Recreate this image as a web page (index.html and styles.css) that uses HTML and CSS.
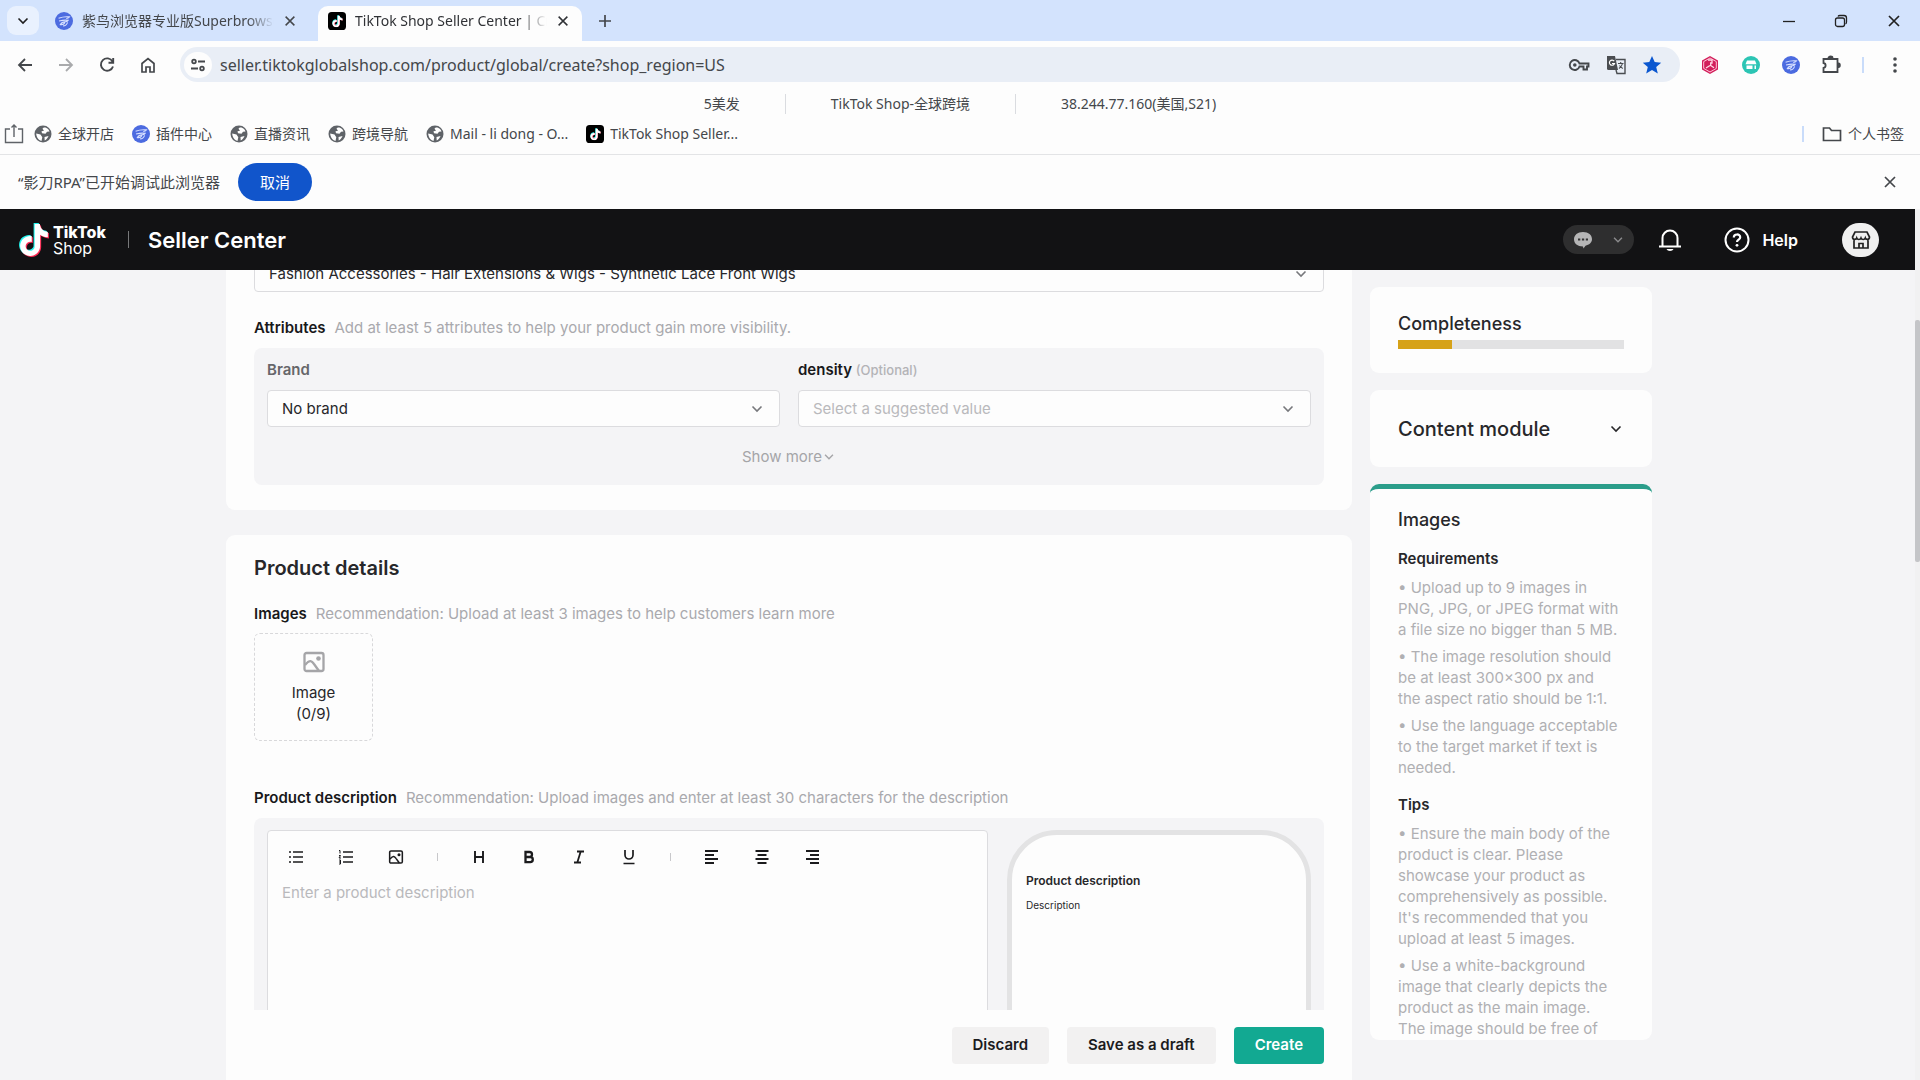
FILE: index.html
```html
<!DOCTYPE html>
<html lang="en">
<head>
<meta charset="utf-8">
<title>TikTok Shop Seller Center</title>
<link rel="stylesheet" href="styles.css">
</head>
<body>
<svg class="defs" aria-hidden="true">
  <symbol id="note" viewBox="0 0 24 24"><path d="M12.525.02c1.31-.02 2.61-.01 3.91-.02.08 1.53.63 3.09 1.75 4.17 1.12 1.11 2.7 1.62 4.24 1.79v4.03c-1.44-.05-2.89-.35-4.2-.97-.57-.26-1.1-.59-1.62-.93-.01 2.92.01 5.84-.02 8.75-.08 1.4-.54 2.79-1.35 3.94-1.31 1.92-3.58 3.17-5.91 3.21-1.43.08-2.86-.31-4.08-1.03-2.02-1.19-3.44-3.37-3.65-5.71-.02-.5-.03-1-.01-1.49.18-1.9 1.12-3.72 2.58-4.96 1.66-1.44 3.98-2.13 6.15-1.72.02 1.48-.04 2.96-.04 4.44-.99-.32-2.15-.23-3.02.37-.63.41-1.11 1.04-1.36 1.75-.21.51-.15 1.07-.14 1.61.24 1.64 1.82 3.02 3.5 2.87 1.12-.01 2.19-.66 2.77-1.61.19-.33.4-.67.41-1.06.1-1.79.06-3.57.07-5.36.01-4.03-.01-8.05.02-12.07z"/></symbol>
  <symbol id="chevron" viewBox="0 0 16 16"><path d="M3.5 5.5 8 10l4.500-4.500" fill="none" stroke="currentColor" stroke-width="1.600"/></symbol>
  <symbol id="cross" viewBox="0 0 16 16"><path d="m3 3 10 10M13 3 3 13" fill="none" stroke="currentColor" stroke-width="1.700"/></symbol>
  <symbol id="globe" viewBox="0 0 18 18"><circle cx="9" cy="9" r="8.500" fill="#5f6368"/><path d="M2.200 8.500 6.500 9.500l1.800 2.800-.8 3.700C4.500 15.200 2.300 12.200 2.200 8.500zM8.500 3.800c.5-1.300 2-1.600 3-1.300 2 .8 3.500 2.200 4 4l-2.500.3-1.500 2-3.500-.5-.5-2 2.500-.6zM10.500 12l4-1c-.5 1.800-2 3.700-3.800 4.500z" fill="#fff"/></symbol>
  <symbol id="bird" viewBox="0 0 20 20"><circle cx="10" cy="10" r="10" fill="#4c6be0"/><path d="M4 7c4-1.500 8-2 12-1.500-1 1.300-2 1.600-3.500 1.700M4.500 10c4-1 7-1.300 10-.8-1 1.300-2 1.500-3 1.600M6 14c1-2 3-3 5-3-.5 2-2 3.500-5 3zm3 1.500c2 0 4-1.500 5-4" fill="none" stroke="#d7e0ff" stroke-width="1.300"/></symbol>
  <symbol id="tik" viewBox="0 0 20 20"><rect width="20" height="20" rx="4" fill="#000"/><use href="#note" x="4" y="3" width="12" height="13" fill="#25f4ee"/><use href="#note" x="5" y="4" width="12" height="13" fill="#fe2c55"/><use href="#note" x="4" y="4" width="13" height="13" fill="#fff"/></symbol>
  <symbol id="picture" viewBox="0 0 24 24"><rect x="2.500" y="3" width="19" height="18" rx="2" fill="none" stroke="currentColor" stroke-width="2.300"/><circle cx="16.500" cy="8.500" r="2.300" fill="currentColor"/><path d="M3 15c5-6 7-4 9-1l5 7" fill="none" stroke="currentColor" stroke-width="2.300"/></symbol>
</svg>

<div class="tabs">
  <button class="tab-search" aria-label="Search tabs"><svg class="i16"><use href="#chevron"/></svg></button>
  <div class="tab">
    <svg class="i18"><use href="#bird"/></svg><span class="tab-title">紫鸟浏览器专业版Superbrowser</span>
    <button class="bare" aria-label="Close tab"><svg class="i14"><use href="#cross"/></svg></button>
  </div>
  <div class="tab active">
    <svg class="i18"><use href="#tik"/></svg><span class="tab-title">TikTok Shop Seller Center | Create</span>
    <button class="bare" aria-label="Close tab"><svg class="i14"><use href="#cross"/></svg></button>
  </div>
  <button class="bare new-tab" aria-label="New tab"><svg class="i16" viewBox="0 0 16 16"><path d="M8 2v12M2 8h12" stroke="currentColor" stroke-width="1.700"/></svg></button>
  <div class="window">
    <button class="bare" aria-label="Minimize"><svg class="i14" viewBox="0 0 14 14"><path d="M1 7.500h12" stroke="currentColor" stroke-width="1.300"/></svg></button>
    <button class="bare" aria-label="Restore"><svg class="i14" viewBox="0 0 14 14" fill="none" stroke="currentColor" stroke-width="1.300"><rect x="1.500" y="4" width="9" height="8.500" rx="2"/><path d="M4 2.500C4.500 1.500 5 1.500 6 1.500h4c2 0 2.500 1 2.500 2.500v4c0 1 0 1.500-1 2"/></svg></button>
    <button class="bare" aria-label="Close window"><svg class="i16"><use href="#cross"/></svg></button>
  </div>
</div>

<div class="toolbar">
  <div class="nav">
    <button class="bare" aria-label="Back"><svg class="i18" viewBox="0 0 18 18" fill="none" stroke="currentColor" stroke-width="1.800"><path d="M16 9H3M9 3 3 9l6 6"/></svg></button>
    <button class="bare faint" aria-label="Forward"><svg class="i18" viewBox="0 0 18 18" fill="none" stroke="currentColor" stroke-width="1.800"><path d="M2 9h13M9 3l6 6-6 6"/></svg></button>
    <button class="bare" aria-label="Reload"><svg class="i18" viewBox="0 0 18 18" fill="none" stroke="currentColor" stroke-width="1.900"><path d="M14.500 5.500A6.200 6.200 0 1 0 15 10.500M15.200 2v4.700h-4.700"/></svg></button>
    <button class="bare" aria-label="Home"><svg class="i18" viewBox="0 0 18 18" fill="none" stroke="currentColor" stroke-width="1.700"><path d="M3 7.500 9 2.500l6 5V16h-4v-5H7v5H3z"/></svg></button>
  </div>
  <div class="omnibox">
    <button class="site" aria-label="Site information"><svg class="i16" viewBox="0 0 16 16" fill="none" stroke="currentColor" stroke-width="1.800"><circle cx="4" cy="4.500" r="1.800"/><path d="M8 4.500h7M1 11.500h7"/><circle cx="12" cy="11.500" r="1.800"/></svg></button>
    <input class="url" aria-label="Address" value="seller.tiktokglobalshop.com/product/global/create?shop_region=US">
    <div class="omni-icons">
      <svg class="i22" viewBox="0 0 22 22" fill="none" stroke="currentColor" stroke-width="1.900"><path d="M11.500 9.500h9v3h-1.500v3h-3.500v-3h-4a5 5 0 1 1 0-3z"/><circle cx="6.800" cy="11" r="1.800" fill="currentColor" stroke="none"/></svg>
      <svg class="i20" viewBox="0 0 20 20"><path d="M1 1h8l3 14H2.500A1.500 1.500 0 0 1 1 13.500z" fill="#4a4d51"/><path d="M10 4.500h9v14h-8l-1-3.500" fill="none" stroke="#4a4d51" stroke-width="1.400"/><path d="M8.200 6.200A2.600 2.600 0 1 0 8.500 8.500H6" fill="none" stroke="#fff" stroke-width="1.200"/><path d="M12 8.500h5.500M14.700 7v1.500M16.500 8.500c-.5 2.500-2 4-3.500 5M13.500 10.500c1 1.500 2 2.300 3.300 3" fill="none" stroke="#4a4d51" stroke-width="1.100"/></svg>
      <svg class="i20" viewBox="0 0 20 20"><path d="m10 1 2.700 6.100 6.500.6-5 4.300 1.600 6.500-5.800-3.500-5.800 3.500L5.800 12 .8 7.700l6.500-.6z" fill="#0b57d0"/></svg>
    </div>
  </div>
  <div class="extensions">
    <svg class="i20" viewBox="0 0 20 20"><path d="m10 1 8 4.500v9L10 19l-8-4.500v-9z" fill="#d21f5b"/><path d="m10 3 6.300 3.600v6.800L10 17l-6.300-3.600V6.600z" fill="none" stroke="#ffc3d6"/><path d="M8 5h4v3h-1.300v2.500l3.300 2.300M10 10.500 6 13" fill="none" stroke="#ffdbe6" stroke-width="1.300"/></svg>
    <svg class="i20" viewBox="0 0 20 20"><circle cx="10" cy="10" r="9" fill="#2cc5b4"/><path d="m6 5.500-1.500 3.800h11L14 5.500zM5.500 10.500V14h6v-3.500zm8 0h1.500V14h-1.500z" fill="#fff"/></svg>
    <svg class="i18"><use href="#bird"/></svg>
    <svg class="i20" viewBox="0 0 20 20" fill="none" stroke="currentColor" stroke-width="1.800"><path d="M2.500 4h14v13h-14v-4c2.800-.5 2.800-4.500 0-5z"/><path d="M7.500 3c0-2 4-2 4 0zM17.500 8.500c1.800 0 1.800 3.500 0 3.500z" fill="currentColor"/></svg>
    <span class="bar"></span>
    <svg class="i20" viewBox="0 0 20 20" fill="currentColor"><circle cx="10" cy="4" r="1.800"/><circle cx="10" cy="10" r="1.800"/><circle cx="10" cy="16" r="1.800"/></svg>
  </div>
</div>

<div class="session">
  <span>5美发</span><span>TikTok Shop-全球跨境</span><span>38.244.77.160(美国,S21)</span>
</div>

<nav class="bookmarks">
  <svg class="i20" viewBox="0 0 20 20" fill="none" stroke="#5f6368" stroke-width="1.400"><path d="M6 5H1.500v13.500h17V5H14M10 13V1M7.500 3.500 10 1l2.500 2.500"/></svg>
  <a href="#"><svg class="i18"><use href="#globe"/></svg>全球开店</a>
  <a href="#"><svg class="i18"><use href="#bird"/></svg>插件中心</a>
  <a href="#"><svg class="i18"><use href="#globe"/></svg>直播资讯</a>
  <a href="#"><svg class="i18"><use href="#globe"/></svg>跨境导航</a>
  <a href="#"><svg class="i18"><use href="#globe"/></svg>Mail - li dong - O...</a>
  <a href="#"><svg class="i18"><use href="#tik"/></svg>TikTok Shop Seller...</a>
  <span class="bar push"></span>
  <a href="#"><svg class="i20" viewBox="0 0 20 20" fill="none" stroke="#44474b" stroke-width="1.700"><path d="M1.500 4h6l2 2.500h9v10h-17z"/></svg>个人书签</a>
</nav>

<div class="infobar">
  <span>“影刀RPA”已开始调试此浏览器</span>
  <button class="cancel">取消</button>
  <button class="bare push" aria-label="Dismiss"><svg class="i16"><use href="#cross"/></svg></button>
</div>

<div class="viewport">
  <div class="site-col">
    <header class="header">
      <svg class="logo" viewBox="0 0 30 32"><use href="#note" x="-1" y="0" width="30" height="30" fill="#25f4ee"/><use href="#note" x="1" y="2" width="30" height="30" fill="#fe2c55"/><use href="#note" x="0" y="1" width="30" height="30" fill="#fff"/></svg>
      <span class="brand"><b>TikTok</b><span>Shop</span></span>
      <span class="brand-bar"></span>
      <span class="center-title">Seller Center</span>
      <button class="chat push" aria-label="Messages">
        <svg class="i20" viewBox="0 0 20 20"><path d="M10 2c5.500 0 9 3 9 7.300 0 3.500-3 5.500-6.500 6.500L10.500 18.500l-.5-2c-5.500 0-9-3-9-7.200S4.500 2 10 2z" fill="#b5b5b6"/><path d="M5 8.500h2.300v2H5zm3.900 0h2.300v2H8.900zm3.900 0H15v2h-2.200z" fill="#333"/></svg>
        <svg class="i14"><use href="#chevron"/></svg>
      </button>
      <button class="bare" aria-label="Notifications"><svg class="i24" viewBox="0 0 24 24" fill="none" stroke="#fff" stroke-width="2"><path d="M4.500 18V10a7.500 7.500 0 0 1 15 0v8M1 18.500h22"/><path d="M8.500 21h7c-1 2.500-6 2.500-7 0z" fill="#fff" stroke="none"/></svg></button>
      <a class="help" href="#"><svg class="i26" viewBox="0 0 26 26" fill="none" stroke="#fff" stroke-width="2"><circle cx="13" cy="13" r="11.500"/><path d="M9.800 10.500c0-4 6.400-4 6.400-.2 0 2.300-3.200 2.300-3.200 4.700" stroke-width="2.200"/><circle cx="13" cy="18.300" r="1.400" fill="#fff" stroke="none"/></svg>Help</a>
      <button class="store" aria-label="Shop"><svg class="i20" viewBox="0 0 20 20" fill="none" stroke="#222" stroke-width="1.700"><path d="M4 2h12l2.500 5c0 3-3.500 3-4.200 1-.8 2-3.500 2-4.300 0-.8 2-3.500 2-4.300 0-.7 2-4.200 2-4.200-1zM3 10v8h14v-8M8 18v-4.500h4V18"/></svg></button>
    </header>

    <main class="page">
      <div class="editor-col">
        <div class="scroll">
          <section class="card first">
            <div class="picker">
              <select class="field" aria-label="Category"><option>Fashion Accessories - Hair Extensions &amp; Wigs - Synthetic Lace Front Wigs</option></select>
              <svg class="i16"><use href="#chevron"/></svg>
            </div>
            <p class="label-row"><b>Attributes</b><span>Add at least 5 attributes to help your product gain more visibility.</span></p>
            <div class="panel">
              <div class="attrs">
                <div class="attr">
                  <label class="muted" for="brand">Brand</label>
                  <div class="picker"><select class="field" id="brand"><option>No brand</option></select><svg class="i16"><use href="#chevron"/></svg></div>
                </div>
                <div class="attr">
                  <label for="density">density <small>(Optional)</small></label>
                  <div class="picker"><select class="field empty" id="density"><option>Select a suggested value</option></select><svg class="i16"><use href="#chevron"/></svg></div>
                </div>
              </div>
              <button class="more">Show more<svg class="i14"><use href="#chevron"/></svg></button>
            </div>
          </section>

          <section class="card details">
            <h2>Product details</h2>
            <p class="label-row"><b>Images</b><span>Recommendation: Upload at least 3 images to help customers learn more</span></p>
            <button class="upload"><svg class="i24"><use href="#picture"/></svg><span>Image<br>(0/9)</span></button>
            <p class="label-row"><b>Product description</b><span>Recommendation: Upload images and enter at least 30 characters for the description</span></p>
            <div class="panel desc">
              <div class="rich">
                <div class="tools">
                  <button class="bare" aria-label="Bulleted list"><svg class="i16" viewBox="0 0 16 16" stroke="currentColor" stroke-width="1.700"><path d="M5 3h10M5 8h10M5 13h10M1 3h2M1 8h2M1 13h2"/></svg></button>
                  <button class="bare" aria-label="Numbered list"><svg class="i16" viewBox="0 0 16 16" fill="none" stroke="currentColor" stroke-width="1.700"><path d="M5 3h10M5 8h10M5 13h10"/><path d="M1 1.500h1v3M1 6.500h1.500L1 9h2M1 11h1.500v4H1M1 13h1.500" stroke-width="1"/></svg></button>
                  <button class="bare" aria-label="Insert image"><svg class="i16"><use href="#picture"/></svg></button>
                  <span class="sep"></span>
                  <button class="bare" aria-label="Heading"><svg class="i16" viewBox="0 0 16 16" fill="none" stroke="currentColor" stroke-width="1.900"><path d="M4 2v12M12 2v12M4 8h8"/></svg></button>
                  <button class="bare" aria-label="Bold"><svg class="i16" viewBox="0 0 16 16" fill="none" stroke="currentColor" stroke-width="2.300"><path d="M4.500 3h4a2.400 2.400 0 0 1 0 5h-4zM4.500 8h4.700a2.500 2.500 0 0 1 0 5.200H4.500z"/></svg></button>
                  <button class="bare" aria-label="Italic"><svg class="i16" viewBox="0 0 16 16" fill="none" stroke="currentColor" stroke-width="1.800"><path d="M6 2.500h7M3 13.500h7M9.700 2.500l-3.400 11"/></svg></button>
                  <button class="bare" aria-label="Underline"><svg class="i16" viewBox="0 0 16 16" fill="none" stroke="currentColor" stroke-width="1.700"><path d="M4 1v5a4 4 0 0 0 8 0V1M2.500 14.500h11"/></svg></button>
                  <span class="sep"></span>
                  <button class="bare" aria-label="Align left"><svg class="i16" viewBox="0 0 16 16" stroke="currentColor" stroke-width="1.800"><path d="M1 2h13M1 6h9M1 10h13M1 14h9"/></svg></button>
                  <button class="bare" aria-label="Align center"><svg class="i16" viewBox="0 0 16 16" stroke="currentColor" stroke-width="1.800"><path d="M1.500 2h13M3.500 6h9M1.500 10h13M3.500 14h9"/></svg></button>
                  <button class="bare" aria-label="Align right"><svg class="i16" viewBox="0 0 16 16" stroke="currentColor" stroke-width="1.800"><path d="M2 2h13M6 6h9M2 10h13M6 14h9"/></svg></button>
                </div>
                <textarea aria-label="Product description" placeholder="Enter a product description"></textarea>
              </div>
              <div class="phone"><b>Product description</b><span>Description</span></div>
            </div>
          </section>
        </div>
        <footer class="actions">
          <button class="btn">Discard</button>
          <button class="btn">Save as a draft</button>
          <button class="btn primary">Create</button>
        </footer>
      </div>

      <aside class="side">
        <section class="box complete">
          <h3 id="comp">Completeness</h3>
          <div class="meter" role="progressbar" aria-labelledby="comp" aria-valuenow="24"><div class="meter-fill" style="width:24%"></div></div>
        </section>
        <button class="box module">Content module<svg class="i16"><use href="#chevron"/></svg></button>
        <section class="box guide">
          <h3>Images</h3>
          <h4>Requirements</h4>
          <p>• Upload up to 9 images in PNG, JPG, or JPEG format with a file size no bigger than 5 MB.</p>
          <p>• The image resolution should be at least 300×300 px and<br>the aspect ratio should be 1:1.</p>
          <p>• Use the language acceptable to the target market if text is needed.</p>
          <h4>Tips</h4>
          <p>• Ensure the main body of the product is clear. Please showcase your product as comprehensively as possible. It's recommended that you upload at least 5 images.</p>
          <p>• Use a white-background image that clearly depicts the product as the main image.<br>The image should be free of</p>
        </section>
      </aside>
    </main>
  </div>
  <div class="scrollbar"><div class="thumb"></div></div>
</div>
</body>
</html>
```
FILE: styles.css
```css
* { box-sizing: border-box; }
body {
  margin: 0;
  height: 100vh;
  display: flex;
  flex-direction: column;
  overflow: hidden;
  background: #fdfdfd;
  color: #44474b;
  font: 14px/20px "Noto Sans", "Noto Sans CJK SC", sans-serif;
}
button, input, select, textarea { font: inherit; color: inherit; margin: 0; }
button { border: 0; padding: 0; display: flex; align-items: center; justify-content: center; }
h2, h3, h4, p { margin: 0; }
a { color: inherit; text-decoration: none; }
svg { flex: none; display: block; }
.defs { position: absolute; width: 0; height: 0; }
.bare { background: none; }
.push { margin-left: auto; }
.i14 { width: 14px; height: 14px; }
.i16 { width: 16px; height: 16px; }
.i18 { width: 18px; height: 18px; }
.i20 { width: 20px; height: 20px; }
.i22 { width: 22px; height: 22px; }
.i24 { width: 24px; height: 24px; }
.i26 { width: 26px; height: 26px; }

/* Tab strip */
.tabs {
  height: 41px;
  flex: none;
  display: flex;
  align-items: center;
  background: #d3e3fd;
  padding: 0 18px 0 7px;
}
.tab-search { width: 32px; height: 29px; border-radius: 9px; background: #e9f1fe; color: #1f1f1f; }
.tab {
  width: 264px;
  height: 35px;
  align-self: flex-end;
  display: flex;
  align-items: center;
  gap: 9px;
  padding: 0 12px 6px 10px;
}
.tab:not(.active) { margin: 0 9px 0 6px; }
.tab.active { background: #fdfdfd; border-radius: 10px 10px 0 0; color: #303236; }
.tab-title {
  flex: 1;
  overflow: hidden;
  white-space: nowrap;
  -webkit-mask-image: linear-gradient(to right, #000 86%, transparent);
  mask-image: linear-gradient(to right, #000 86%, transparent);
}
.new-tab { margin-left: 15px; }
.window { margin-left: auto; display: flex; gap: 38px; color: #222; }

/* Address row */
.toolbar { height: 47px; flex: none; display: flex; align-items: center; padding: 0 15px 0 16px; }
.nav { display: flex; gap: 23px; width: 164px; }
.faint { opacity: .45; }
.omnibox {
  flex: 1;
  height: 35px;
  border-radius: 18px;
  background: #e9eef6;
  display: flex;
  align-items: center;
  padding: 0 18px 0 4px;
}
.site { width: 28px; height: 26px; border-radius: 13px; background: #fdfdfd; }
.url { flex: 1; border: 0; background: none; font-size: 16px; padding: 0 0 0 8px; min-width: 0; }
.omni-icons { display: flex; align-items: center; gap: 16px; }
.extensions { display: flex; align-items: center; gap: 21px; margin-left: 20px; }
.bar { width: 2px; height: 16px; background: #c9dcfa; }

.session { height: 32px; flex: none; display: flex; align-items: center; justify-content: center; white-space: nowrap; }
.session span { padding: 0 45px; line-height: 20px; }
.session span + span { border-left: 1px solid #dadce0; }

.bookmarks {
  height: 35px;
  flex: none;
  display: flex;
  align-items: center;
  gap: 18px;
  padding: 0 16px 6px 4px;
  border-bottom: 1px solid #e3e4e6;
}
.bookmarks a { display: flex; align-items: center; gap: 6px; white-space: nowrap; }
.bookmarks > svg { margin-right: -8px; }

.infobar { height: 54px; flex: none; display: flex; align-items: center; padding: 0 22px 1px 18px; font-size: 15px; }
.cancel { margin-left: 18px; width: 74px; height: 38px; border-radius: 19px; background: #1155cb; color: #fff; }

/* Site */
.viewport { flex: 1; min-height: 0; display: flex; font-family: Inter, "Liberation Sans", sans-serif; color: #27272a; }
.site-col { flex: 1; min-width: 0; display: flex; flex-direction: column; }
.scrollbar { width: 5px; background: #f1f1f2; padding-top: 111px; }
.thumb { height: 242px; background: #c4c5c8; border-radius: 2px; }

.header {
  height: 61px;
  flex: none;
  display: flex;
  align-items: center;
  padding: 0 36px 0 18px;
  background: #121214;
  color: #fff;
}
.logo { width: 32px; height: 34px; }
.brand { display: flex; flex-direction: column; margin-left: 3px; font-size: 16px; line-height: 16px; }
.brand b { font-weight: 800; }
.brand-bar { width: 1px; height: 17px; background: #77787a; margin: 0 19px 0 22px; }
.center-title { font-size: 22px; line-height: 28px; font-weight: 600; }
.chat { width: 71px; height: 29px; border-radius: 15px; background: #2e2e2f; color: #8b8b8d; gap: 18px; margin-right: 24px; }
.help { display: flex; align-items: center; gap: 12px; font-size: 16px; font-weight: 600; margin: 0 44px 0 42px; }
.store { width: 37px; height: 34px; border-radius: 18px; background: #f0f0f0; }

.page {
  flex: 1;
  min-height: 0;
  display: grid;
  grid-template-columns: minmax(0, 1fr) 282px;
  gap: 18px;
  padding: 0 263px 0 226px;
  background: #f4f4f6;
  overflow: hidden;
}
.editor-col { display: flex; flex-direction: column; min-height: 0; }
.scroll { flex: 1; min-height: 0; overflow: hidden; display: flex; flex-direction: column; gap: 25px; }
.card { background: #fdfdfd; border-radius: 9px; padding: 0 28px; flex: none; }
.first { margin-top: -40px; padding-top: 25px; padding-bottom: 25px; }
.details { padding-top: 20px; }
.picker { position: relative; }
.picker svg { position: absolute; right: 15px; top: 11px; color: #77787c; pointer-events: none; }
.field {
  appearance: none;
  width: 100%;
  height: 37px;
  border: 1px solid #dcdcdf;
  border-radius: 4px;
  background: #fdfdfd;
  padding: 0 40px 0 14px;
  font-size: 15px;
}
.empty { color: #b9b9bc; }
.label-row { display: flex; gap: 9px; align-items: center; font-size: 15px; line-height: 22px; white-space: nowrap; color: #a9a9ad; }
.label-row b { font-weight: 600; color: #18181a; }
.first .label-row { margin: 25px 0 9px; }
.panel { background: #f4f4f6; border-radius: 8px; padding: 12px 13px; }
.attrs { display: grid; grid-template-columns: 1fr 1fr; gap: 18px; }
.attr label { display: block; font-size: 15px; line-height: 20px; margin-bottom: 10px; font-weight: 600; color: #18181a; }
.attr label.muted { color: #66666a; }
.attr small { font-size: 13px; font-weight: 500; color: #b3b3b6; }
.more { background: none; margin: 20px auto 6px; font-size: 15px; line-height: 20px; color: #a5a5a8; }

h2 { font-size: 20px; line-height: 26px; font-weight: 600; }
.details h2 { margin-bottom: 22px; }
.upload {
  width: 119px;
  height: 108px;
  margin: 8px 0 46px;
  flex-direction: column;
  gap: 8px;
  border: 1px dashed #d8d8da;
  border-radius: 6px;
  background: none;
  font-size: 15px;
  line-height: 21px;
}
.upload svg { color: #a5a5a8; }
.desc { display: grid; grid-template-columns: minmax(0, 721fr) minmax(0, 304fr); gap: 19px; margin-top: 9px; }
.rich { border: 1px solid #dcdcdf; border-radius: 4px; background: #fdfdfd; height: 260px; display: flex; flex-direction: column; }
.tools { display: flex; align-items: center; gap: 34px; padding: 18px 20px; color: #1b1b1d; }
.sep { width: 1px; height: 8px; background: #c8c8cb; margin: 0 -1px; }
.rich textarea { flex: 1; border: 0; resize: none; background: none; padding: 0 14px; font-size: 15px; line-height: 20px; overflow: hidden; }
.rich textarea::placeholder { color: #b9b9bc; }
.phone { border: 5px solid #e3e3e4; border-radius: 50px; background: #fdfdfd; display: flex; flex-direction: column; padding: 36px 14px; gap: 7px; font-size: 12px; line-height: 20px; }
.phone b { font-weight: 600; }
.phone span { font-size: 10px; line-height: 14px; }

.actions { height: 70px; flex: none; display: flex; justify-content: flex-end; align-items: center; gap: 18px; padding: 0 28px; background: #fdfdfd; }
.btn { height: 37px; padding: 0 21px; border-radius: 4px; background: #f2f1f1; font-size: 15px; font-weight: 600; color: #1b1b1d; }
.primary { background: #12a992; color: #fff; }

.side { display: flex; flex-direction: column; gap: 17px; padding: 17px 0 40px; min-height: 0; }
.box { background: #fdfdfd; border-radius: 9px; padding: 0 28px; text-align: left; }
.box h3 { font-size: 18px; line-height: 24px; font-weight: 500; }
.complete { padding-top: 25px; height: 86px; flex: none; }
.meter { height: 9px; margin-top: 4px; background: #e2e2e3; }
.meter-fill { height: 100%; background: #d6a218; }
.module { height: 77px; flex: none; justify-content: space-between; font-size: 20px; font-weight: 500; }
.guide { flex: 1; min-height: 0; overflow: hidden; border-top: 5px solid #2a9d8a; padding-top: 19px; }
.guide h4 { font-size: 15px; line-height: 22px; font-weight: 600; margin: 16px 0 7px; }
.guide p { font-size: 15px; line-height: 21px; margin-bottom: 6px; color: #b0b0b3; }
```
